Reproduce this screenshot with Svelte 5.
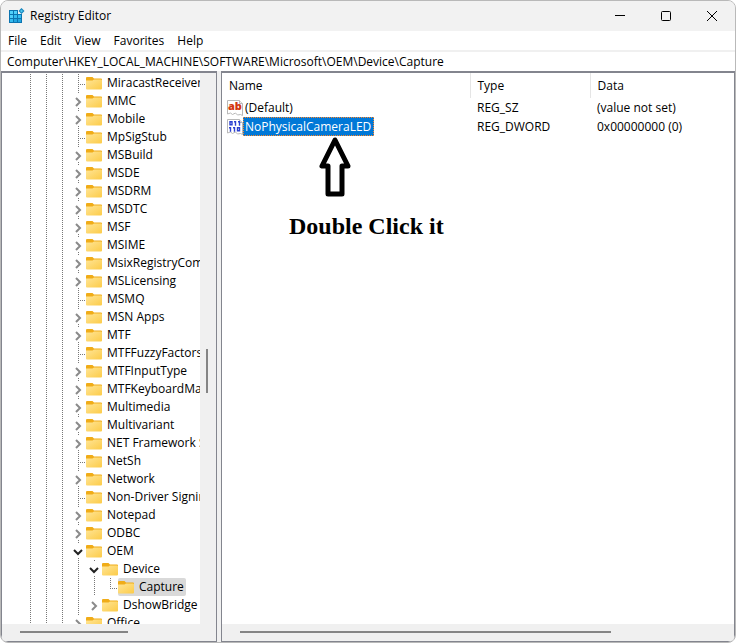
<script>
  const menu = ["File", "Edit", "View", "Favorites", "Help"];

  const keys = [
    { name: "MiracastReceiver", leaf: true },
    { name: "MMC" },
    { name: "Mobile" },
    { name: "MpSigStub", leaf: true },
    { name: "MSBuild" },
    { name: "MSDE" },
    { name: "MSDRM" },
    { name: "MSDTC" },
    { name: "MSF" },
    { name: "MSIME" },
    { name: "MsixRegistryCompatibility" },
    { name: "MSLicensing" },
    { name: "MSMQ", leaf: true },
    { name: "MSN Apps" },
    { name: "MTF" },
    { name: "MTFFuzzyFactors", leaf: true },
    { name: "MTFInputType" },
    { name: "MTFKeyboardMappings" },
    { name: "Multimedia" },
    { name: "Multivariant" },
    { name: "NET Framework Setup" },
    { name: "NetSh", leaf: true },
    { name: "Network" },
    { name: "Non-Driver Signing", leaf: true },
    { name: "Notepad" },
    { name: "ODBC" },
    { name: "OEM", open: true },
    { name: "Device", open: true, depth: 1 },
    { name: "Capture", leaf: true, depth: 2 },
    { name: "DshowBridge", depth: 1, last: true },
    { name: "Office" }
  ];

  const values = [
    { name: "(Default)", type: "REG_SZ", data: "(value not set)" },
    { name: "NoPhysicalCameraLED", type: "REG_DWORD", data: "0x00000000 (0)", binary: true }
  ];

  let path = $state("Computer\\HKEY_LOCAL_MACHINE\\SOFTWARE\\Microsoft\\OEM\\Device\\Capture");
  let selectedKey = $state("Capture");
  let selectedValue = $state("NoPhysicalCameraLED");
</script>

{#snippet folder()}
  <svg width="16" height="16" viewBox="0 0 16 16" aria-hidden="true">
    <defs>
      <linearGradient id="fold" x1="0" y1="0" x2="1" y2="1">
        <stop offset="0" stop-color="#ffe596" />
        <stop offset="1" stop-color="#fccb48" />
      </linearGradient>
    </defs>
    <path d="M0 3a1 1 0 0 1 1-1h5.500l1.500 1.500h7a1 1 0 0 1 1 1V7H0z" fill="#f0ac18" />
    <path d="M0 5.500h6.500L8 4.500h7a1 1 0 0 1 1 1V13.500a1 1 0 0 1-1 1H1a1 1 0 0 1-1-1z" fill="url(#fold)" />
  </svg>
{/snippet}

<div class="window">
  <header>
    <svg width="16" height="16" viewBox="0 0 16 16" aria-hidden="true">
      <path d="M0 2h9v4h4v9H0z" fill="#0c74b0" />
      <path d="M1 3h3v3H1zM5 3h3v3H5zM1 7h3v3H1z" fill="#4fd0fa" />
      <path d="M5 7h3v3H5zM9 7h3v3H9zM1 11h3v3H1z" fill="#35bdf0" />
      <path d="M5 11h3v3H5zM9 11h3v3H9z" fill="#22a6e0" />
      <path d="m12.500 0 3 3-3 3-3-3z" fill="#1583bb" />
      <path d="m12.500 1.500 1.500 1.500-1.500 1.500L11 3z" fill="#4fc6ee" />
    </svg>
    <h1>Registry Editor</h1>
    <div class="controls">
      <button aria-label="Minimize">
        <svg width="12" height="12" viewBox="0 0 12 12"><path d="M1 5.500h10" /></svg>
      </button>
      <button aria-label="Maximize">
        <svg width="12" height="12" viewBox="0 0 12 12"><rect x="1.500" y="1.500" width="9" height="9" rx="1" /></svg>
      </button>
      <button aria-label="Close">
        <svg width="12" height="12" viewBox="0 0 12 12"><path d="m1 1 10 10M11 1 1 11" /></svg>
      </button>
    </div>
  </header>

  <nav>
    {#each menu as item}
      <button>{item}</button>
    {/each}
  </nav>

  <input class="address" aria-label="Address" bind:value={path} />

  <main>
    <section class="tree-pane">
      <div class="tree-row">
        <ul>
          {#each keys as key}
            <li>
              {#each { length: 3 + (key.depth ?? 0) } as _}
                <span class="guide"></span>
              {/each}
              <span class={["branch", key.leaf && "leaf", key.depth === 2 && "end", key.last && "last"]}>
                {#if !key.leaf}
                  <svg class={{ open: key.open }} width="10" height="14" viewBox="0 0 10 14" aria-hidden="true">
                    <path d={key.open ? "m1 6 4 4 4-4" : "m3 4 4 4-4 4"} />
                  </svg>
                {/if}
              </span>
              <button
                class={["key", selectedKey === key.name && "selected"]}
                onclick={() => (selectedKey = key.name)}
              >
                {@render folder()}
                {key.name}
              </button>
            </li>
          {/each}
        </ul>
        <div class="vscroll"><span></span></div>
      </div>
      <div class="hscroll"><span></span></div>
    </section>

    <section class="value-pane">
      <div class="values">
        <table>
          <thead>
            <tr><th class="name">Name</th><th class="type">Type</th><th>Data</th></tr>
          </thead>
          <tbody>
            {#each values as value}
              <tr onclick={() => (selectedValue = value.name)}>
                <td>
                  <div class="value">
                    <svg width="16" height="16" viewBox="0 0 16 16" aria-hidden="true">
                      <path d="M.5.5h12l3 3v12l-2-1-3 .5-2-2-3 1.500-2-1.500-3 1z" fill="#fff" stroke="#b8b8b8" />
                      <path d="M12.500.5v3h3" fill="#eee" stroke="#b8b8b8" />
                      {#if value.binary}
                        <path
                          class="bits"
                          d="M3 2.700h2v3H3zM7 2.700h1.500v4M11 2.700h1.500v4M2 8.700h1.500v4M6 8.700h1.500v4M10.500 8.700h2v3h-2z"
                        />
                      {:else}
                        <text x="1" y="10">ab</text>
                      {/if}
                    </svg>
                    <span class={["label", selectedValue === value.name && "selected"]}>{value.name}</span>
                  </div>
                </td>
                <td>{value.type}</td>
                <td>{value.data}</td>
              </tr>
            {/each}
          </tbody>
        </table>
        <figure>
          <svg width="34" height="62" viewBox="0 0 34 62" aria-hidden="true">
            <path d="M17 4 4 30h6v28h14V30h6z" />
          </svg>
          <figcaption>Double Click it</figcaption>
        </figure>
      </div>
      <div class="hscroll wide"><span></span></div>
    </section>
  </main>
</div>

<style>
  :global(body) {
    background: #fff;
  }

  .window,
  .window * {
    box-sizing: border-box;
  }

  .window {
    display: flex;
    flex-direction: column;
    height: 100vh;
    overflow: hidden;
    border: 1px solid #b9b9b9;
    border-radius: 8px;
    background: #f0f0f0;
    color: #000;
    font: 12px/18px "Open Sans", "Noto Sans", sans-serif;
  }

  button,
  input {
    margin: 0;
    padding: 0;
    border: 0;
    background: none;
    color: inherit;
    font: inherit;
  }

  header {
    display: flex;
    flex: none;
    align-items: center;
    height: 30px;
    padding-left: 8px;
    background: #f2f2f2;
  }

  h1 {
    margin: 0 auto 0 5px;
    font: inherit;
  }

  .controls {
    display: flex;
    align-self: stretch;
  }

  .controls button {
    display: grid;
    place-items: center;
    width: 46px;
  }

  .controls svg {
    fill: none;
    stroke: #000;
  }

  nav {
    display: flex;
    flex: none;
    gap: 13px;
    height: 19px;
    padding-left: 7px;
    background: #fff;
  }

  .address {
    flex: none;
    width: 100%;
    height: 21px;
    border-top: 2px solid #f0f0f0;
    padding-left: 6px;
    background: #fff;
  }

  main {
    display: flex;
    flex: 1;
    gap: 4px;
    min-height: 0;
  }

  section {
    display: flex;
    flex-direction: column;
    min-width: 0;
    border: 1px solid #83858e;
    border-top-width: 2px;
  }

  .tree-pane {
    flex: 0 0 216px;
    border-bottom-left-radius: 7px;
  }

  .value-pane {
    flex: 1;
    border-bottom-right-radius: 7px;
  }

  .tree-row {
    display: flex;
    flex: 1;
    min-height: 0;
    background: #fff;
  }

  ul {
    flex: 1;
    min-width: 0;
    margin: 0;
    padding: 1px 0 0 20px;
    overflow: hidden;
    list-style: none;
  }

  li {
    display: flex;
    height: 18px;
  }

  .guide,
  .branch {
    flex: none;
    width: 16px;
    background: repeating-linear-gradient(#777 0 1px, transparent 1px 2px) 8px 0 / 1px 100% no-repeat;
  }

  .branch {
    display: grid;
    place-items: center;
  }

  .branch.leaf {
    background:
      repeating-linear-gradient(#777 0 1px, transparent 1px 2px) 8px 0 / 1px 100% no-repeat,
      repeating-linear-gradient(90deg, #777 0 1px, transparent 1px 2px) 8px 10px / 8px 1px no-repeat;
  }

  .branch.end {
    background-size: 1px 11px, 8px 1px;
  }

  .branch.last {
    background: none;
  }

  .branch svg {
    background: #fff;
    fill: none;
    stroke: #8a8a8a;
    stroke-width: 2;
  }

  .branch .open {
    stroke: #222;
  }

  .key {
    display: flex;
    flex: none;
    align-items: center;
    gap: 5px;
    padding-right: 2px;
    border-radius: 2px;
    white-space: nowrap;
  }

  .key.selected {
    background: #d9d9d9;
  }

  .vscroll {
    flex: none;
    width: 16px;
    background: #f0f0f0;
  }

  .vscroll span {
    display: block;
    width: 2px;
    height: 8%;
    margin: 276px 0 0 6px;
    background: #858585;
  }

  .hscroll {
    flex: none;
    height: 17px;
    padding: 7px 0 0 18px;
    background: #f0f0f0;
  }

  .hscroll span {
    display: block;
    width: 55%;
    height: 2px;
    background: #858585;
  }

  .hscroll.wide span {
    width: 75%;
  }

  .values {
    flex: 1;
    min-height: 0;
    background: #fff;
  }

  table {
    width: 100%;
    border-collapse: collapse;
    table-layout: fixed;
  }

  th {
    height: 25px;
    padding: 0 0 0 7px;
    border-right: 1px solid #e5e5e5;
    font-weight: 400;
    text-align: left;
  }

  th:last-child {
    border-right: 0;
  }

  .name {
    width: 248px;
  }

  .type {
    width: 120px;
  }

  td {
    height: 19px;
    padding: 0 0 0 7px;
  }

  td:first-child {
    padding-left: 5px;
  }

  .value {
    display: flex;
    align-items: center;
  }

  .value text {
    fill: #d3370f;
    font: 800 11px "Open Sans", sans-serif;
  }

  .bits {
    fill: none;
    stroke: #2a3fd0;
    stroke-width: 1.400;
  }

  .label {
    padding: 0 2px 0 1px;
    border: 1px dotted transparent;
    line-height: 17px;
  }

  .label.selected {
    border-color: #ff8728;
    background: #0078d7;
    color: #fff;
  }

  figure {
    display: flex;
    flex-direction: column;
    align-items: flex-start;
    margin: 0 0 0 67px;
  }

  figure svg {
    margin-left: 29px;
    fill: #fff;
    stroke: #000;
    stroke-width: 5;
    stroke-linejoin: round;
  }

  figcaption {
    margin-top: 13px;
    font: bold 24px/30px "Liberation Serif", serif;
    white-space: nowrap;
  }
</style>
